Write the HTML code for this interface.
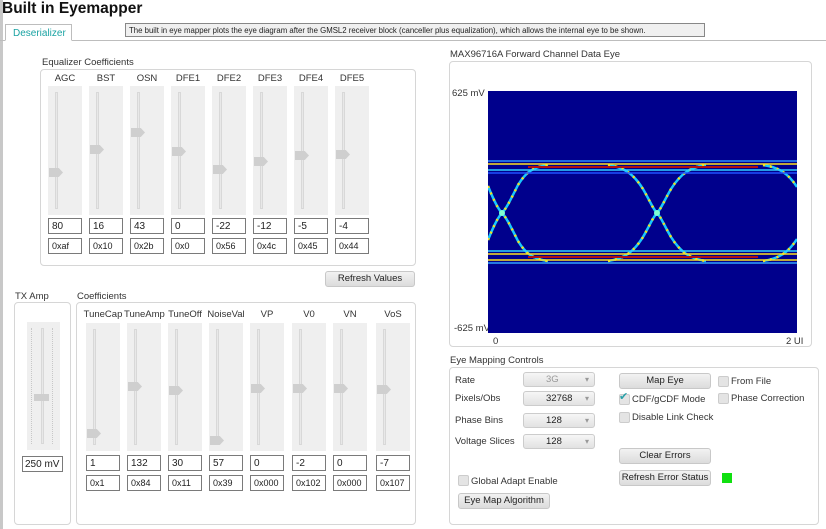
<!DOCTYPE html>
<html><head><meta charset="utf-8"><style>
*{margin:0;padding:0;box-sizing:border-box}
body{width:826px;height:529px;background:#fff;position:relative;overflow:hidden;font-family:"Liberation Sans",Arial,sans-serif;font-size:10px;color:#222}
.a{position:absolute}
.box{position:absolute;border:1px solid #d6d6d6;border-radius:4px;background:#fff}
.lbl{position:absolute;font-size:9.5px;color:#333;white-space:nowrap}
.trk{position:absolute;background:#efefef}
.rail{position:absolute;width:3px;border:1px solid #d8d8d8;background:#e8e8e8}
.th{position:absolute;width:14px;height:9px;background:#cfcfcf;clip-path:polygon(0 0,70% 0,100% 50%,70% 100%,0 100%)}
.tb{position:absolute;height:16px;border:1px solid #7a7a7a;background:#fff;font-size:10px;padding:2px 3px;color:#222;white-space:nowrap;overflow:hidden}
.btn{position:absolute;height:16px;border:1px solid #c8c8c8;border-radius:3px;background:linear-gradient(#f2f2f2,#dcdcdc);font-size:9.5px;text-align:center;line-height:14px;color:#222}
.cb{position:absolute;width:11px;height:11px;border:1px solid #ccc;border-radius:2px;background:#e4e4e4}
.dd{position:absolute;width:72px;height:15px;border:1px solid #ccc;border-radius:3px;background:linear-gradient(#f6f6f6,#e2e2e2);font-size:9.5px;line-height:13px;padding-left:22px}
.dd:after{content:"▾";position:absolute;right:5px;top:0;font-size:8px;color:#999}
</style></head><body>
<div class="a" style="left:0;top:0;width:3px;height:529px;background:#c8c8c8"></div>
<div class="a" style="left:2px;top:0;font-size:15.5px;font-weight:bold;color:#111">Built in Eyemapper</div>
<div class="a" style="left:0;top:40px;width:826px;height:1px;background:#bdbdbd"></div>
<div class="a" style="left:5px;top:24px;width:67px;height:17px;border:1px solid #bdbdbd;border-bottom:1px solid #fff;background:#fff;color:#1aa3a3;font-size:10px;padding:3px 0 0 7px">Deserializer</div>
<div class="a" style="left:125px;top:23px;width:580px;height:14px;border:1px solid #888;background:#f0f0f0;font-size:7.8px;padding:1px 3px;white-space:nowrap;overflow:hidden;line-height:11px">The built in eye mapper plots the eye diagram after the GMSL2 receiver block (canceller plus equalization), which allows the internal eye to be shown.</div>

<div class="lbl" style="left:42px;top:57px">Equalizer Coefficients</div>
<div class="box" style="left:40px;top:69px;width:376px;height:197px"></div>
<div id="eq"></div>
<div class="btn" style="left:325px;top:271px;width:90px">Refresh Values</div>

<div class="lbl" style="left:15px;top:291px">TX Amp</div>
<div class="box" style="left:14px;top:302px;width:57px;height:223px"></div>
<div class="trk" style="left:27px;top:322px;width:33px;height:128px"></div>
<div class="a" style="left:31px;top:328px;width:1px;height:116px;border-left:1px dotted #c8c8c8"></div>
<div class="a" style="left:52px;top:328px;width:1px;height:116px;border-left:1px dotted #c8c8c8"></div>
<div class="rail" style="left:41px;top:328px;height:116px"></div>
<div class="a" style="left:34px;top:394px;width:15px;height:7px;background:#cfcfcf"></div>
<div class="tb" style="left:22px;top:456px;width:41px;padding:2px 2px">250 mV</div>

<div class="lbl" style="left:77px;top:291px">Coefficients</div>
<div class="box" style="left:76px;top:302px;width:340px;height:223px"></div>
<div id="co"></div>

<div class="lbl" style="left:450px;top:49px">MAX96716A Forward Channel Data Eye</div>
<div class="box" style="left:449px;top:61px;width:363px;height:286px"></div>
<div class="lbl" style="left:452px;top:88px">625 mV</div>
<div class="lbl" style="left:454px;top:323px">-625 mV</div>
<div class="lbl" style="left:493px;top:336px">0</div>
<div class="lbl" style="left:786px;top:336px">2 UI</div>
<svg class="a" style="left:488px;top:91px" width="309" height="242" viewBox="0 0 309 242">
<rect width="309" height="242" fill="#00008c"/>
<g fill="none" stroke-width="2.5">
<path d="M0 95 C6 110 10 118 14 122 C18 126 22 134 30 150 C38 163 45 168 60 170 M0 149 C6 134 10 126 14 122 C18 118 22 110 30 94 C38 81 45 76 60 74 M120 74 C135 76 145 82 155 98 C162 110 165 118 169 122 C173 126 176 134 183 146 C193 162 203 168 218 170 M120 170 C135 168 145 162 155 146 C162 134 165 126 169 122 C173 118 176 110 183 98 C193 82 203 76 218 74 M275 74 C290 76 300 82 309 96 M275 170 C290 168 300 162 309 148" stroke="#19c8ff"/>
<path d="M0 95 C6 110 10 118 14 122 C18 126 22 134 30 150 C38 163 45 168 60 170 M0 149 C6 134 10 126 14 122 C18 118 22 110 30 94 C38 81 45 76 60 74 M120 74 C135 76 145 82 155 98 C162 110 165 118 169 122 C173 126 176 134 183 146 C193 162 203 168 218 170 M120 170 C135 168 145 162 155 146 C162 134 165 126 169 122 C173 118 176 110 183 98 C193 82 203 76 218 74 M275 74 C290 76 300 82 309 96 M275 170 C290 168 300 162 309 148" stroke="#f0e020" stroke-dasharray="2 5"/>
</g>
<g stroke-width="1.5">
<line x1="0" y1="70" x2="309" y2="70" stroke="#2a8cff"/>
<line x1="0" y1="73" x2="309" y2="73" stroke="#ffe020"/>
<line x1="40" y1="76" x2="270" y2="76" stroke="#b01010" stroke-width="2"/>
<line x1="0" y1="79" x2="309" y2="79" stroke="#30d0ff"/>
<line x1="0" y1="82" x2="309" y2="82" stroke="#2050ff"/>
<line x1="0" y1="160" x2="309" y2="160" stroke="#30d0ff"/>
<line x1="0" y1="163" x2="309" y2="163" stroke="#ffe020"/>
<line x1="40" y1="166" x2="270" y2="166" stroke="#b01010" stroke-width="2"/>
<line x1="0" y1="169" x2="309" y2="169" stroke="#ffe020"/>
<line x1="0" y1="172" x2="309" y2="172" stroke="#30a0ff"/>
</g>
<circle cx="14" cy="122" r="3" fill="#80ffd0"/><circle cx="169" cy="122" r="3" fill="#80ffd0"/>
</svg>

<div class="lbl" style="left:450px;top:355px">Eye Mapping Controls</div>
<div class="box" style="left:449px;top:367px;width:370px;height:158px"></div>
<div class="lbl" style="left:455px;top:375px">Rate</div>
<div class="lbl" style="left:455px;top:393px">Pixels/Obs</div>
<div class="lbl" style="left:455px;top:415px">Phase Bins</div>
<div class="lbl" style="left:455px;top:436px">Voltage Slices</div>
<div class="dd" style="left:523px;top:372px;color:#999">3G</div>
<div class="dd" style="left:523px;top:391px">32768</div>
<div class="dd" style="left:523px;top:413px">128</div>
<div class="dd" style="left:523px;top:434px">128</div>
<div class="btn" style="left:619px;top:373px;width:92px">Map Eye</div>
<div class="cb" style="left:718px;top:376px"></div><div class="lbl" style="left:731px;top:376px">From File</div>
<div class="cb" style="left:718px;top:393px"></div><div class="lbl" style="left:731px;top:393px">Phase Correction</div>
<div class="cb" style="left:619px;top:394px"></div><div class="a" style="left:619px;top:390px;color:#2aa0a8;font-size:11px">✔</div><div class="lbl" style="left:632px;top:394px">CDF/gCDF Mode</div>
<div class="cb" style="left:619px;top:412px"></div><div class="lbl" style="left:632px;top:412px">Disable Link Check</div>
<div class="btn" style="left:619px;top:448px;width:92px">Clear Errors</div>
<div class="btn" style="left:619px;top:470px;width:92px">Refresh Error Status</div>
<div class="a" style="left:722px;top:473px;width:10px;height:10px;background:#10e010"></div>
<div class="cb" style="left:458px;top:475px"></div><div class="lbl" style="left:471px;top:476px">Global Adapt Enable</div>
<div class="btn" style="left:458px;top:493px;width:92px">Eye Map Algorithm</div>

<script>
function sl(id,xs,labels,ty,tb,thumbs,v1,v2,ly,yv,yh){var h='';for(var i=0;i<xs.length;i++){var x=xs[i];
h+='<div class="lbl" style="left:'+(x-3)+'px;top:'+ly+'px;width:40px;text-align:center">'+labels[i]+'</div>';
h+='<div class="trk" style="left:'+x+'px;top:'+ty+'px;width:34px;height:'+tb+'px"></div>';
h+='<div class="rail" style="left:'+(x+7)+'px;top:'+(ty+6)+'px;height:'+(tb-12)+'px"></div>';
h+='<div class="th" style="left:'+(x+1)+'px;top:'+(thumbs[i]-4)+'px"></div>';
h+='<div class="tb" style="left:'+x+'px;top:'+yv+'px;width:34px">'+v1[i]+'</div>';
h+='<div class="tb" style="left:'+x+'px;top:'+yh+'px;width:34px;font-size:9px">'+v2[i]+'</div>';}
document.getElementById(id).innerHTML=h;}
sl('eq',[48,89,130,171,212,253,294,335],['AGC','BST','OSN','DFE1','DFE2','DFE3','DFE4','DFE5'],86,129,[172,149,132,151,169,161,155,154],['80','16','43','0','-22','-12','-5','-4'],['0xaf','0x10','0x2b','0x0','0x56','0x4c','0x45','0x44'],73,218,238);
sl('co',[86,127,168,209,250,292,333,376],['TuneCap','TuneAmp','TuneOff','NoiseVal','VP','V0','VN','VoS'],323,128,[433,386,390,440,388,388,388,389],['1','132','30','57','0','-2','0','-7'],['0x1','0x84','0x11','0x39','0x000','0x102','0x000','0x107'],309,455,475);
</script>
</body></html>
